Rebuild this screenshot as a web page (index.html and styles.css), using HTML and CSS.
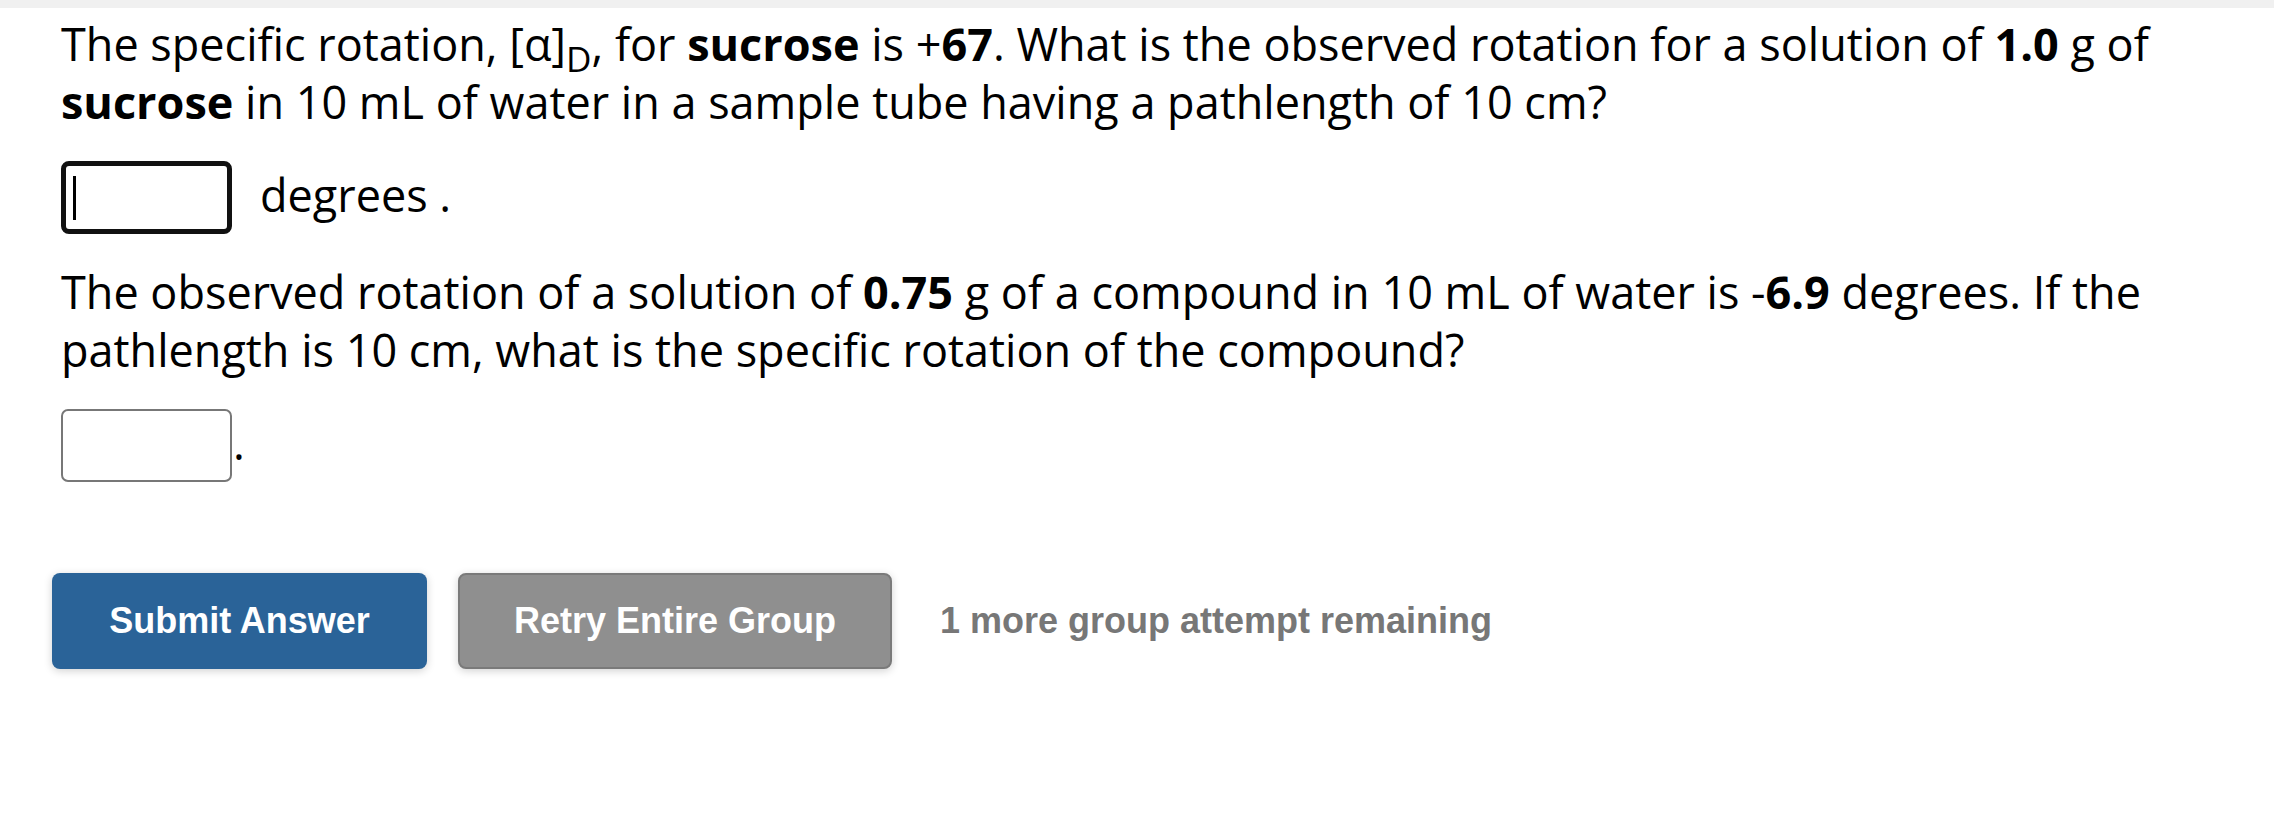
FILE: index.html
```html
<!DOCTYPE html>
<html>
<head>
<meta charset="utf-8">
<link rel="stylesheet" href="styles.css">
</head>
<body>
<div class="topbar"></div>
<main class="content">
  <p class="q">The specific rotation, [α]<sub class="sub">D</sub>, for <b>sucrose</b> is +<b>67</b>. What is the observed rotation for a solution of <b>1.0</b> g of <b>sucrose</b> in 10 mL of water in a sample tube having a pathlength of 10 cm?</p>
  <div class="answer-row">
    <div class="input active"><span class="caret"></span></div>
    <span class="unit">degrees .</span>
  </div>
  <p class="q q2">The observed rotation of a solution of <b>0.75</b> g of a compound in 10 mL of water is -<b>6.9</b> degrees. If the pathlength is 10 cm, what is the specific rotation of the compound?</p>
  <div class="answer-row answer-row2">
    <div class="input"></div>
    <span class="period">.</span>
  </div>
  <div class="actions">
    <button class="btn btn-submit">Submit Answer</button>
    <button class="btn btn-retry">Retry Entire Group</button>
    <span class="attempts">1 more group attempt remaining</span>
  </div>
</main>
</body>
</html>
```
FILE: styles.css
```css
html, body {
  margin: 0;
  padding: 0;
  background: #ffffff;
}
body {
  width: 2274px;
  height: 817px;
  overflow: hidden;
  font-family: "Open Sans", "Noto Sans", sans-serif;
  color: #000;
}
.topbar {
  height: 8px;
  background: #f0f0f0;
}
.content {
  padding: 7px 30px 0 61px;
}
.q {
  margin: 0;
  font-size: 45px;
  line-height: 58px;
}
.q b {
  font-weight: 700;
}
.sub {
  font-size: 0.78em;
  vertical-align: -0.3em;
  line-height: 0;
}
.answer-row {
  display: flex;
  align-items: flex-start;
  margin-top: 30px;
}
.input {
  box-sizing: border-box;
  width: 171px;
  height: 73px;
  border: 2px solid #777777;
  border-radius: 7px;
  background: #fff;
  position: relative;
}
.input.active {
  border: 5px solid #111111;
  border-radius: 8px;
}
.caret {
  position: absolute;
  left: 7px;
  top: 10px;
  width: 3px;
  height: 44px;
  background: #000;
}
.unit {
  font-size: 45px;
  line-height: 58px;
  margin-top: 5px;
  margin-left: 28px;
}
.period {
  font-size: 45px;
  line-height: 58px;
  margin-top: 5px;
  margin-left: 1px;
}
.q2 {
  margin-top: 29px;
}
.answer-row2 {
  margin-top: 30px;
}
.actions {
  display: flex;
  align-items: center;
  margin-top: 91px;
  margin-left: -9px;
}
.btn {
  box-sizing: border-box;
  height: 96px;
  font-family: "Liberation Sans", Arial, sans-serif;
  font-weight: 700;
  font-size: 36px;
  line-height: 40px;
  color: #ffffff;
  border-radius: 8px;
  box-shadow: 0 2px 8px rgba(0, 0, 0, 0.18);
  cursor: pointer;
}
.btn-submit {
  width: 375px;
  background: #2a6398;
  border: none;
}
.btn-retry {
  width: 434px;
  margin-left: 31px;
  background: #8f8f8f;
  border: 2px solid #7a7a7a;
}
.attempts {
  margin-left: 48px;
  font-family: "Liberation Sans", Arial, sans-serif;
  font-weight: 700;
  font-size: 36px;
  color: #777777;
}
```
